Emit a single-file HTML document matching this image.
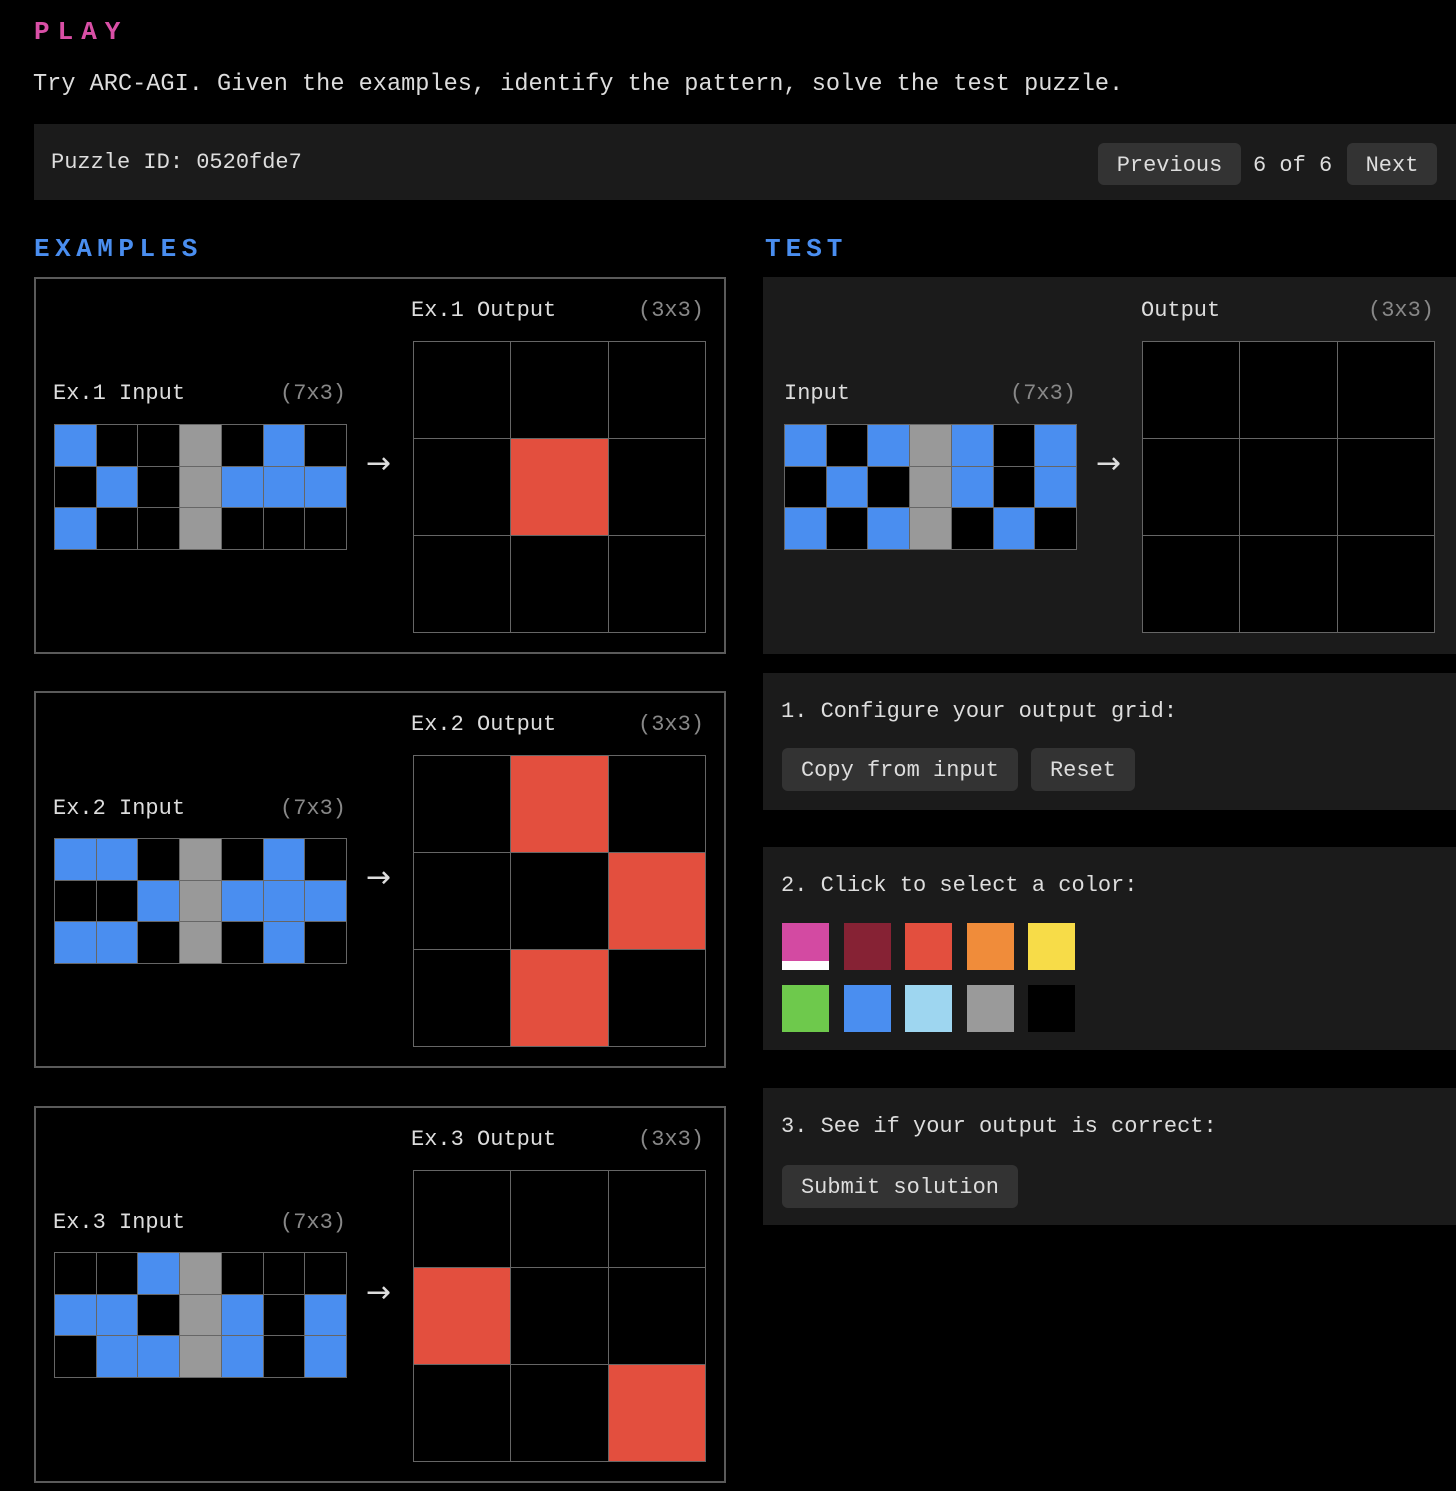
<!DOCTYPE html>
<html><head><meta charset="utf-8"><style>
*{margin:0;padding:0;box-sizing:border-box}
body{width:1456px;height:1491px;background:#000;position:relative;overflow:hidden;font-family:"Liberation Mono",monospace;color:#ddd}
.a{position:absolute;white-space:nowrap}
.t{font-size:22px;color:#ddd}
.dim{color:#888;font-size:22px}
.h{font-weight:bold;font-size:26px;letter-spacing:5px}
.box{position:absolute;border:2px solid #5a5a5a;width:692px;height:377px}
.pan{position:absolute;background:#1b1b1b}
.btn{position:absolute;background:#333;border-radius:6px;font-size:22px;color:#ddd;display:flex;align-items:center;justify-content:center;padding-top:2px}
.g{position:absolute;display:grid;background:#666;gap:1px;padding:1px}
.g7{grid-template-columns:repeat(7,1fr);grid-template-rows:repeat(3,1fr);width:293px;height:126px}
.g3{grid-template-columns:repeat(3,1fr);grid-template-rows:repeat(3,1fr);width:293px;height:292px}
.g>i{display:block;background:#000}
.g>i.b{background:#4a8ef0}.g>i.y{background:#999}.g>i.r{background:#e34f3e}
.arr{position:absolute;font-size:30px;color:#ddd;font-family:"DejaVu Sans",sans-serif}
.sw{position:absolute;width:47px;height:47px}
</style></head><body>
<div class="a h" style="left:34px;top:17px;color:#d94fa6;letter-spacing:8px">PLAY</div>
<div class="a t" style="left:33px;top:71px;font-size:23.6px">Try ARC-AGI. Given the examples, identify the pattern, solve the test puzzle.</div>
<div class="pan" style="left:34px;top:124px;width:1422px;height:76px"></div>
<div class="a t" style="left:51px;top:150px">Puzzle ID: 0520fde7</div>
<div class="btn" style="left:1098px;top:143px;width:143px;height:42px">Previous</div>
<div class="a t" style="left:1253px;top:153px">6 of 6</div>
<div class="btn" style="left:1347px;top:143px;width:90px;height:42px">Next</div>

<div class="a h" style="left:34px;top:234px;color:#4a8ef0;letter-spacing:5.5px">EXAMPLES</div>
<div class="a h" style="left:765px;top:234px;color:#4a8ef0;letter-spacing:5px">TEST</div>

<!-- Ex1 -->
<div class="box" style="left:34px;top:277px"></div>
<div class="a t" style="left:411px;top:298px">Ex.1 Output</div><div class="a dim" style="left:638px;top:298px">(3x3)</div>
<div class="a t" style="left:53px;top:381px">Ex.1 Input</div><div class="a dim" style="left:280px;top:381px">(7x3)</div>
<div class="g g7" style="left:54px;top:424px"><i class="b"></i><i></i><i></i><i class="y"></i><i></i><i class="b"></i><i></i><i></i><i class="b"></i><i></i><i class="y"></i><i class="b"></i><i class="b"></i><i class="b"></i><i class="b"></i><i></i><i></i><i class="y"></i><i></i><i></i><i></i></div>
<div class="arr" style="left:366px;top:446px">→</div>
<div class="g g3" style="left:413px;top:341px"><i></i><i></i><i></i><i></i><i class="r"></i><i></i><i></i><i></i><i></i></div>

<!-- Ex2 -->
<div class="box" style="left:34px;top:691px"></div>
<div class="a t" style="left:411px;top:712px">Ex.2 Output</div><div class="a dim" style="left:638px;top:712px">(3x3)</div>
<div class="a t" style="left:53px;top:796px">Ex.2 Input</div><div class="a dim" style="left:280px;top:796px">(7x3)</div>
<div class="g g7" style="left:54px;top:838px"><i class="b"></i><i class="b"></i><i></i><i class="y"></i><i></i><i class="b"></i><i></i><i></i><i></i><i class="b"></i><i class="y"></i><i class="b"></i><i class="b"></i><i class="b"></i><i class="b"></i><i class="b"></i><i></i><i class="y"></i><i></i><i class="b"></i><i></i></div>
<div class="arr" style="left:366px;top:860px">→</div>
<div class="g g3" style="left:413px;top:755px"><i></i><i class="r"></i><i></i><i></i><i></i><i class="r"></i><i></i><i class="r"></i><i></i></div>

<!-- Ex3 -->
<div class="box" style="left:34px;top:1106px"></div>
<div class="a t" style="left:411px;top:1127px">Ex.3 Output</div><div class="a dim" style="left:638px;top:1127px">(3x3)</div>
<div class="a t" style="left:53px;top:1210px">Ex.3 Input</div><div class="a dim" style="left:280px;top:1210px">(7x3)</div>
<div class="g g7" style="left:54px;top:1252px"><i></i><i></i><i class="b"></i><i class="y"></i><i></i><i></i><i></i><i class="b"></i><i class="b"></i><i></i><i class="y"></i><i class="b"></i><i></i><i class="b"></i><i></i><i class="b"></i><i class="b"></i><i class="y"></i><i class="b"></i><i></i><i class="b"></i></div>
<div class="arr" style="left:366px;top:1275px">→</div>
<div class="g g3" style="left:413px;top:1170px"><i></i><i></i><i></i><i class="r"></i><i></i><i></i><i></i><i></i><i class="r"></i></div>

<!-- Test -->
<div class="pan" style="left:763px;top:277px;width:693px;height:377px"></div>
<div class="a t" style="left:1141px;top:298px">Output</div><div class="a dim" style="left:1368px;top:298px">(3x3)</div>
<div class="a t" style="left:784px;top:381px">Input</div><div class="a dim" style="left:1010px;top:381px">(7x3)</div>
<div class="g g7" style="left:784px;top:424px"><i class="b"></i><i></i><i class="b"></i><i class="y"></i><i class="b"></i><i></i><i class="b"></i><i></i><i class="b"></i><i></i><i class="y"></i><i class="b"></i><i></i><i class="b"></i><i class="b"></i><i></i><i class="b"></i><i class="y"></i><i></i><i class="b"></i><i></i></div>
<div class="arr" style="left:1096px;top:446px">→</div>
<div class="g g3" style="left:1142px;top:341px"><i></i><i></i><i></i><i></i><i></i><i></i><i></i><i></i><i></i></div>

<div class="pan" style="left:763px;top:673px;width:693px;height:137px"></div>
<div class="a t" style="left:781px;top:699px">1. Configure your output grid:</div>
<div class="btn" style="left:782px;top:748px;width:236px;height:43px">Copy from input</div>
<div class="btn" style="left:1031px;top:748px;width:104px;height:43px">Reset</div>

<div class="pan" style="left:763px;top:847px;width:693px;height:203px"></div>
<div class="a t" style="left:781px;top:873px">2. Click to select a color:</div>
<div class="sw" style="left:782px;top:923px;background:#d34aa2;border-bottom:9px solid #fff"></div>
<div class="sw" style="left:844px;top:923px;background:#862234"></div>
<div class="sw" style="left:905px;top:923px;background:#e34f3e"></div>
<div class="sw" style="left:967px;top:923px;background:#f08c3a"></div>
<div class="sw" style="left:1028px;top:923px;background:#f7dc48"></div>
<div class="sw" style="left:782px;top:985px;background:#6ec94c"></div>
<div class="sw" style="left:844px;top:985px;background:#4a8ef0"></div>
<div class="sw" style="left:905px;top:985px;background:#9ed6f0"></div>
<div class="sw" style="left:967px;top:985px;background:#9a9a9a"></div>
<div class="sw" style="left:1028px;top:985px;background:#000"></div>

<div class="pan" style="left:763px;top:1088px;width:693px;height:137px"></div>
<div class="a t" style="left:781px;top:1114px">3. See if your output is correct:</div>
<div class="btn" style="left:782px;top:1165px;width:236px;height:43px">Submit solution</div>
</body></html>
